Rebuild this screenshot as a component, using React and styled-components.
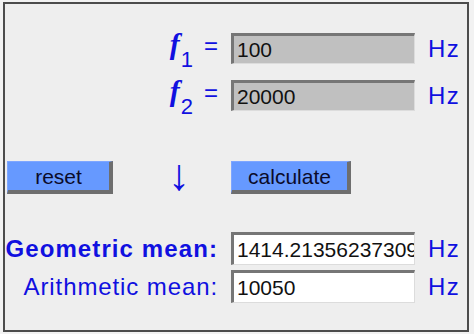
import React from 'react'
import styled, { createGlobalStyle } from 'styled-components'

const blue = '#1010e0'

const GlobalStyle = createGlobalStyle`
    html, body {
        margin: 0;
        padding: 0;
        background: #f2f2f2;
    }
`

const Panel = styled.div`
    box-sizing: border-box;
    width: 466px;
    height: 330px;
    margin: 2px 0 0 3px;
    padding: 29px 0 0 2px;
    background: #eeeeee;
    border: 2px solid #4c4c4c;
    display: flex;
    flex-direction: column;
    font-family: 'Liberation Sans', Arial, sans-serif;
`

const Row = styled.div`
    display: grid;
    grid-template-columns: 211px 184px auto;
    column-gap: 13px;
    align-items: center;
    height: ${p => p.$height || 31}px;
    margin-top: ${p => p.$top || 0}px;
`

const Label = styled.div`
    justify-self: end;
    color: ${blue};
    font-size: 24px;
    letter-spacing: ${p => (p.$bold ? 1.1 : 0.9)}px;
    font-weight: ${p => (p.$bold ? 700 : 400)};
    white-space: nowrap;
`

const FreqLabel = styled.div`
    justify-self: end;
    color: ${blue};
    white-space: nowrap;
    line-height: 1;
    transform: translateY(-4px);
`

const Sym = styled.span`
    font-family: 'Liberation Serif', 'Times New Roman', serif;
    font-style: italic;
    font-weight: 700;
    font-size: 30px;
`

const Sub = styled.sub`
    font-size: 22px;
    line-height: 0;
    vertical-align: -13px;
    margin-left: 1px;
`

const Equals = styled.span`
    font-size: 24px;
    margin-left: 11px;
`

const Field = styled.input`
    box-sizing: border-box;
    width: 184px;
    height: ${p => p.$height || 31}px;
    margin: 0;
    padding: 0 0 0 3px;
    border-style: solid;
    border-width: 3px 1px 1px 3px;
    border-color: #767676 #dcdcdc #dcdcdc #767676;
    background: ${p => (p.$result ? '#ffffff' : '#c0c0c0')};
    color: #111111;
    font-family: 'Liberation Sans', Arial, sans-serif;
    font-size: 21px;
    outline: none;
`

const Unit = styled.div`
    color: ${blue};
    font-size: 24px;
    letter-spacing: 1.5px;
`

const Controls = styled.div`
    display: flex;
    align-items: center;
    justify-content: space-between;
    height: 100%;
    padding-right: 28px;
`

const Button = styled.button`
    box-sizing: border-box;
    width: ${p => p.$width}px;
    height: 33px;
    margin: 0;
    padding: 2px 0 0;
    background: #6699ff;
    border-style: solid;
    border-width: 1px 4px 4px 1px;
    border-color: #7ea6ff #6e6e6e #6e6e6e #7ea6ff;
    color: #0b0b2a;
    font-family: 'Liberation Sans', Arial, sans-serif;
    font-size: 21px;
    cursor: pointer;
`

const Arrow = styled.span`
    color: ${blue};
    font-family: 'Liberation Sans', Arial, sans-serif;
    font-size: 44px;
    line-height: 33px;
    transform: translateY(-3px);
`

const FreqRow = ({ n, value, top }) => (
    <Row $top={top}>
        <FreqLabel>
            <Sym>f</Sym>
            <Sub>{n}</Sub>
            <Equals>=</Equals>
        </FreqLabel>
        <Field readOnly value={value} />
        <Unit>Hz</Unit>
    </Row>
)

const ResultRow = ({ label, bold, value, top }) => (
    <Row $top={top} $height={33}>
        <Label $bold={bold}>{label}</Label>
        <Field readOnly $result $height={33} value={value} />
        <Unit>Hz</Unit>
    </Row>
)

export default function App() {
    const f1 = 100
    const f2 = 20000

    return (
        <>
            <GlobalStyle />
            <Panel>
                <FreqRow n="1" value={f1} />
                <FreqRow n="2" value={f2} top={16} />

                <Row $top={50} $height={33}>
                    <Controls>
                        <Button $width={106}>reset</Button>
                        <Arrow>↓</Arrow>
                    </Controls>
                    <Button $width={120}>calculate</Button>
                </Row>

                <ResultRow label="Geometric mean:" bold value={Math.sqrt(f1 * f2)} top={38} />
                <ResultRow label="Arithmetic mean:" value={(f1 + f2) / 2} top={5} />
            </Panel>
        </>
    )
}
